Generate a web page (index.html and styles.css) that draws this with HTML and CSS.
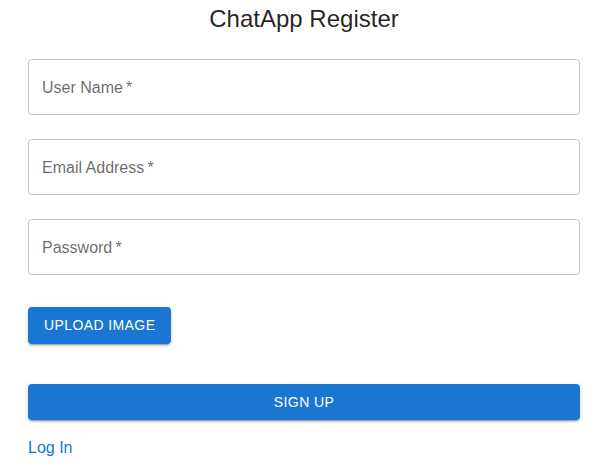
FILE: index.html
```html
<!DOCTYPE html>
<html>
<head>
<meta charset="utf-8">
<link rel="stylesheet" href="styles.css">
</head>
<body>
<div class="container">
  <h1 class="title">ChatApp Register</h1>
  <form class="form">
    <div class="field"><span class="label">User Name<span class="ast">&thinsp;*</span></span></div>
    <div class="field"><span class="label">Email Address<span class="ast">&thinsp;*</span></span></div>
    <div class="field"><span class="label">Password<span class="ast">&thinsp;*</span></span></div>
    <button type="button" class="btn upload">Upload Image</button>
    <button type="button" class="btn signup">Sign Up</button>
    <a class="link" href="#">Log In</a>
  </form>
</div>
</body>
</html>
```

FILE: styles.css
```css
* { box-sizing: border-box; }
body {
  margin: 0;
  background: #fff;
  font-family: "Liberation Sans", Arial, sans-serif;
  color: rgba(0,0,0,0.87);
}
.container {
  width: 552px;
  margin: 0 26px 0 28px;
  padding-top: 3px;
}
.title {
  margin: 0;
  font-size: 24px;
  font-weight: 400;
  line-height: 32px;
  text-align: center;
}
.form {
  display: flex;
  flex-direction: column;
  align-items: flex-start;
  padding-top: 8px;
}
.field {
  width: 100%;
  height: 56px;
  margin: 16px 0 8px;
  border: 1px solid rgba(0,0,0,0.23);
  border-radius: 4px;
  display: flex;
  align-items: center;
  padding-left: 13px;
}
.label {
  font-size: 16px;
  color: rgba(0,0,0,0.6);
  line-height: 23px;
}
.btn {
  font-family: "Liberation Sans", Arial, sans-serif;
  font-size: 14px;
  font-weight: 400;
  text-transform: uppercase;
  letter-spacing: 0.02857em;
  line-height: 24.5px;
  padding: 6px 16px;
  border: 0;
  border-radius: 4px;
  background: #1976d2;
  color: #fff;
  box-shadow: 0px 3px 1px -2px rgba(0,0,0,0.2), 0px 2px 2px 0px rgba(0,0,0,0.14), 0px 1px 5px 0px rgba(0,0,0,0.12);
}
.upload {
  margin-top: 24px;
  margin-bottom: 16px;
}
.signup {
  width: 100%;
  margin-top: 24px;
}
.link {
  margin-top: 16px;
  font-size: 16px;
  line-height: 24px;
  color: #1976d2;
  text-decoration: none;
}
```
